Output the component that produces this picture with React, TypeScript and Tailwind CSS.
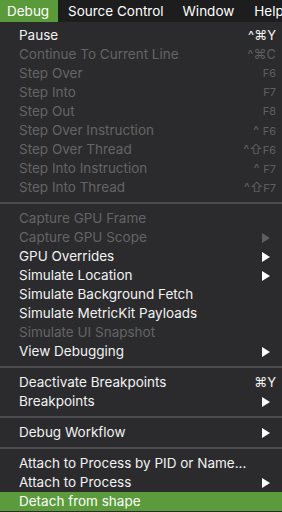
import { Fragment } from 'react';

type TItem =
  | { sep: true }
  | { sep?: false; label: string; key?: string; fkey?: string; disabled?: boolean; sub?: boolean; active?: boolean };

const items: TItem[] = [
  { label: 'Pause', key: '^⌘Y' },
  { label: 'Continue To Current Line', key: '^⌘C', disabled: true },
  { label: 'Step Over', fkey: 'F6', disabled: true },
  { label: 'Step Into', fkey: 'F7', disabled: true },
  { label: 'Step Out', fkey: 'F8', disabled: true },
  { label: 'Step Over Instruction', key: '^ ', fkey: 'F6', disabled: true },
  { label: 'Step Over Thread', key: '^⇧', fkey: 'F6', disabled: true },
  { label: 'Step Into Instruction', key: '^ ', fkey: 'F7', disabled: true },
  { label: 'Step Into Thread', key: '^⇧', fkey: 'F7', disabled: true },
  { sep: true },
  { label: 'Capture GPU Frame', disabled: true },
  { label: 'Capture GPU Scope', disabled: true, sub: true },
  { label: 'GPU Overrides', sub: true },
  { label: 'Simulate Location', sub: true },
  { label: 'Simulate Background Fetch' },
  { label: 'Simulate MetricKit Payloads' },
  { label: 'Simulate UI Snapshot', disabled: true },
  { label: 'View Debugging', sub: true },
  { sep: true },
  { label: 'Deactivate Breakpoints', key: '⌘Y' },
  { label: 'Breakpoints', sub: true },
  { sep: true },
  { label: 'Debug Workflow', sub: true },
  { sep: true },
  { label: 'Attach to Process by PID or Name...' },
  { label: 'Attach to Process', sub: true },
  { label: 'Detach from shape', active: true },
];

const Arrow = ({ dim }: { dim?: boolean }) => (
  <svg width="8" height="10" viewBox="0 0 8 10" className={dim ? 'fill-[#5e5e5e]' : 'fill-white'}>
    <path d="M0 0 L8 5 L0 10 Z" />
  </svg>
);

type TRowProps = {
  label: string;
  keyText?: string;
  fkey?: string;
  disabled?: boolean;
  sub?: boolean;
  active?: boolean;
};

const MenuRow = ({ label, keyText, fkey, disabled, sub, active }: TRowProps) => (
  <div
    className={`flex h-[19px] items-center justify-between pl-[19px] pr-[6px] text-[13.5px] ${
      active ? 'bg-[#5b9b3c] text-white' : disabled ? 'text-[#646464]' : 'text-[#f2f2f2]'
    }`}
  >
    <span className="whitespace-nowrap">{label}</span>
    {(keyText || fkey) && (
      <span className={`flex items-baseline whitespace-pre text-[13px] ${disabled ? 'text-[#5e5e5e]' : ''}`}>
        {keyText}
        {fkey && <span className="text-[11px]">{fkey}</span>}
      </span>
    )}
    {sub && (
      <span className="pr-[6px]">
        <Arrow dim={disabled} />
      </span>
    )}
  </div>
);

export default function App() {
  return (
    <div className="h-[512px] w-[282px] overflow-hidden bg-[#2b2b2d] font-['Inter','Liberation_Sans',sans-serif]">
      <div className="flex h-[22px] items-center overflow-hidden whitespace-nowrap bg-[#1d1d1e] text-[13.5px] text-white">
        <span className="flex h-full w-[58px] shrink-0 items-center bg-[#5a9a3a] pl-[7px]">Debug</span>
        <span className="shrink-0 pl-[10px]">Source Control</span>
        <span className="shrink-0 pl-[19px]">Window</span>
        <span className="shrink-0 pl-[20px]">Help</span>
      </div>
      <div className="pt-[4px]">
        {items.map((it, i) => (
          <Fragment key={i}>
            {it.sep ? (
              <div className="flex h-[12px] items-center">
                <div className="h-[2px] w-full bg-[#4c4c4e]" />
              </div>
            ) : (
              <MenuRow
                label={it.label}
                keyText={it.key}
                fkey={it.fkey}
                disabled={it.disabled}
                sub={it.sub}
                active={it.active}
              />
            )}
          </Fragment>
        ))}
      </div>
    </div>
  );
}
